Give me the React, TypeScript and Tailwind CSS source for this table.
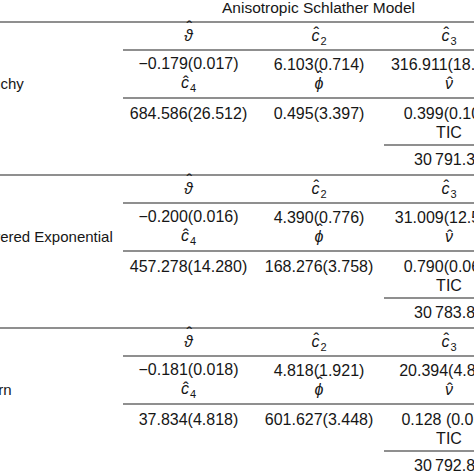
import React from 'react';

type Block = {
  label: string;
  shift: string;
  vals1: string[];
  vals2: string[];
  tic: string;
};

const blocks: Block[] = [
  {
    label: 'Cauchy',
    shift: 'ml-[-1px]',
    vals1: ['−0.179(0.017)', '6.103(0.714)', '316.911(18.204)'],
    vals2: ['684.586(26.512)', '0.495(3.397)', '0.399(0.108)'],
    tic: '30\u2009791.32',
  },
  {
    label: 'Powered Exponential',
    shift: 'ml-[-3px]',
    vals1: ['−0.200(0.016)', '4.390(0.776)', '31.009(12.518)'],
    vals2: ['457.278(14.280)', '168.276(3.758)', '0.790(0.064)'],
    tic: '30\u2009783.85',
  },
  {
    label: 'Matérn',
    shift: 'ml-[-9px]',
    vals1: ['−0.181(0.018)', '4.818(1.921)', '20.394(4.861)'],
    vals2: ['37.834(4.818)', '601.627(3.448)', '0.128 (0.036)'],
    tic: '30\u2009792.84',
  },
];

const head = ['theta', 'c2', 'c3'];
const syms = ['c4', 'phi', 'nu'];

function Hat({ ch, sub, tall }: { ch: string; sub?: string; tall?: boolean }) {
  return (
    <span className="inline-flex items-baseline">
      <span className="relative italic">
        {ch}
        <span
          className={`absolute left-1/2 -translate-x-[35%] not-italic text-[17px] leading-none ${tall ? 'top-[-5px]' : 'top-[1px]'}`}
        >
          ˆ
        </span>
      </span>
      {sub && <span className="text-[11px] relative top-[4px] ml-[1px] not-italic">{sub}</span>}
    </span>
  );
}

function Sym({ k }: { k: string }) {
  if (k === 'theta') return <Hat ch="ϑ" tall />;
  if (k === 'phi') return <Hat ch="ϕ" tall />;
  if (k === 'nu') return <Hat ch="ν" />;
  return <Hat ch="c" sub={k.slice(1)} />;
}

const line = 'border-[#8f8f8f]';

function TableBlock({ b }: { b: Block }) {
  return (
    <div className={`grid grid-cols-[149px_131px_130px_130px] grid-rows-[28px_48px_47px_28px] border-t-2 ${line}`}>
      <div className={`row-span-3 flex items-center text-[15px] whitespace-nowrap ${b.shift}`}>{b.label}</div>
      {head.map((h) => (
        <div key={h} className={`flex items-center justify-center border-b-2 ${line} text-[16px]`}>
          <Sym k={h} />
        </div>
      ))}
      {b.vals1.map((v, i) => (
        <div key={v} className={`flex flex-col items-center justify-center border-b-2 ${line} text-[16px] leading-[19px] whitespace-nowrap`}>
          <span>{v}</span>
          <Sym k={syms[i]} />
        </div>
      ))}
      {b.vals2.map((v, i) => (
        <div
          key={v}
          className={`flex flex-col items-center pt-[5px] text-[16px] leading-[19px] whitespace-nowrap ${i === 2 ? `border-b-2 ${line}` : ''}`}
        >
          <span>{v}</span>
          {i === 2 && <span>TIC</span>}
        </div>
      ))}
      <div className="col-start-4 flex items-center justify-center text-[16px] whitespace-nowrap">{b.tic}</div>
    </div>
  );
}

export default function App() {
  return (
    <div
      className="w-[474px] h-[474px] overflow-hidden bg-white text-[#161616]"
      style={{ fontFamily: '"Liberation Sans", "DejaVu Sans", sans-serif' }}
    >
      <div className="ml-[-26px] w-[540px]">
        <div className="grid grid-cols-[149px_391px] h-[21px]">
          <div />
          <div className="text-center text-[15.5px] leading-[16px] whitespace-nowrap">Anisotropic Schlather Model</div>
        </div>
        {blocks.map((b) => (
          <TableBlock key={b.label} b={b} />
        ))}
      </div>
    </div>
  );
}
